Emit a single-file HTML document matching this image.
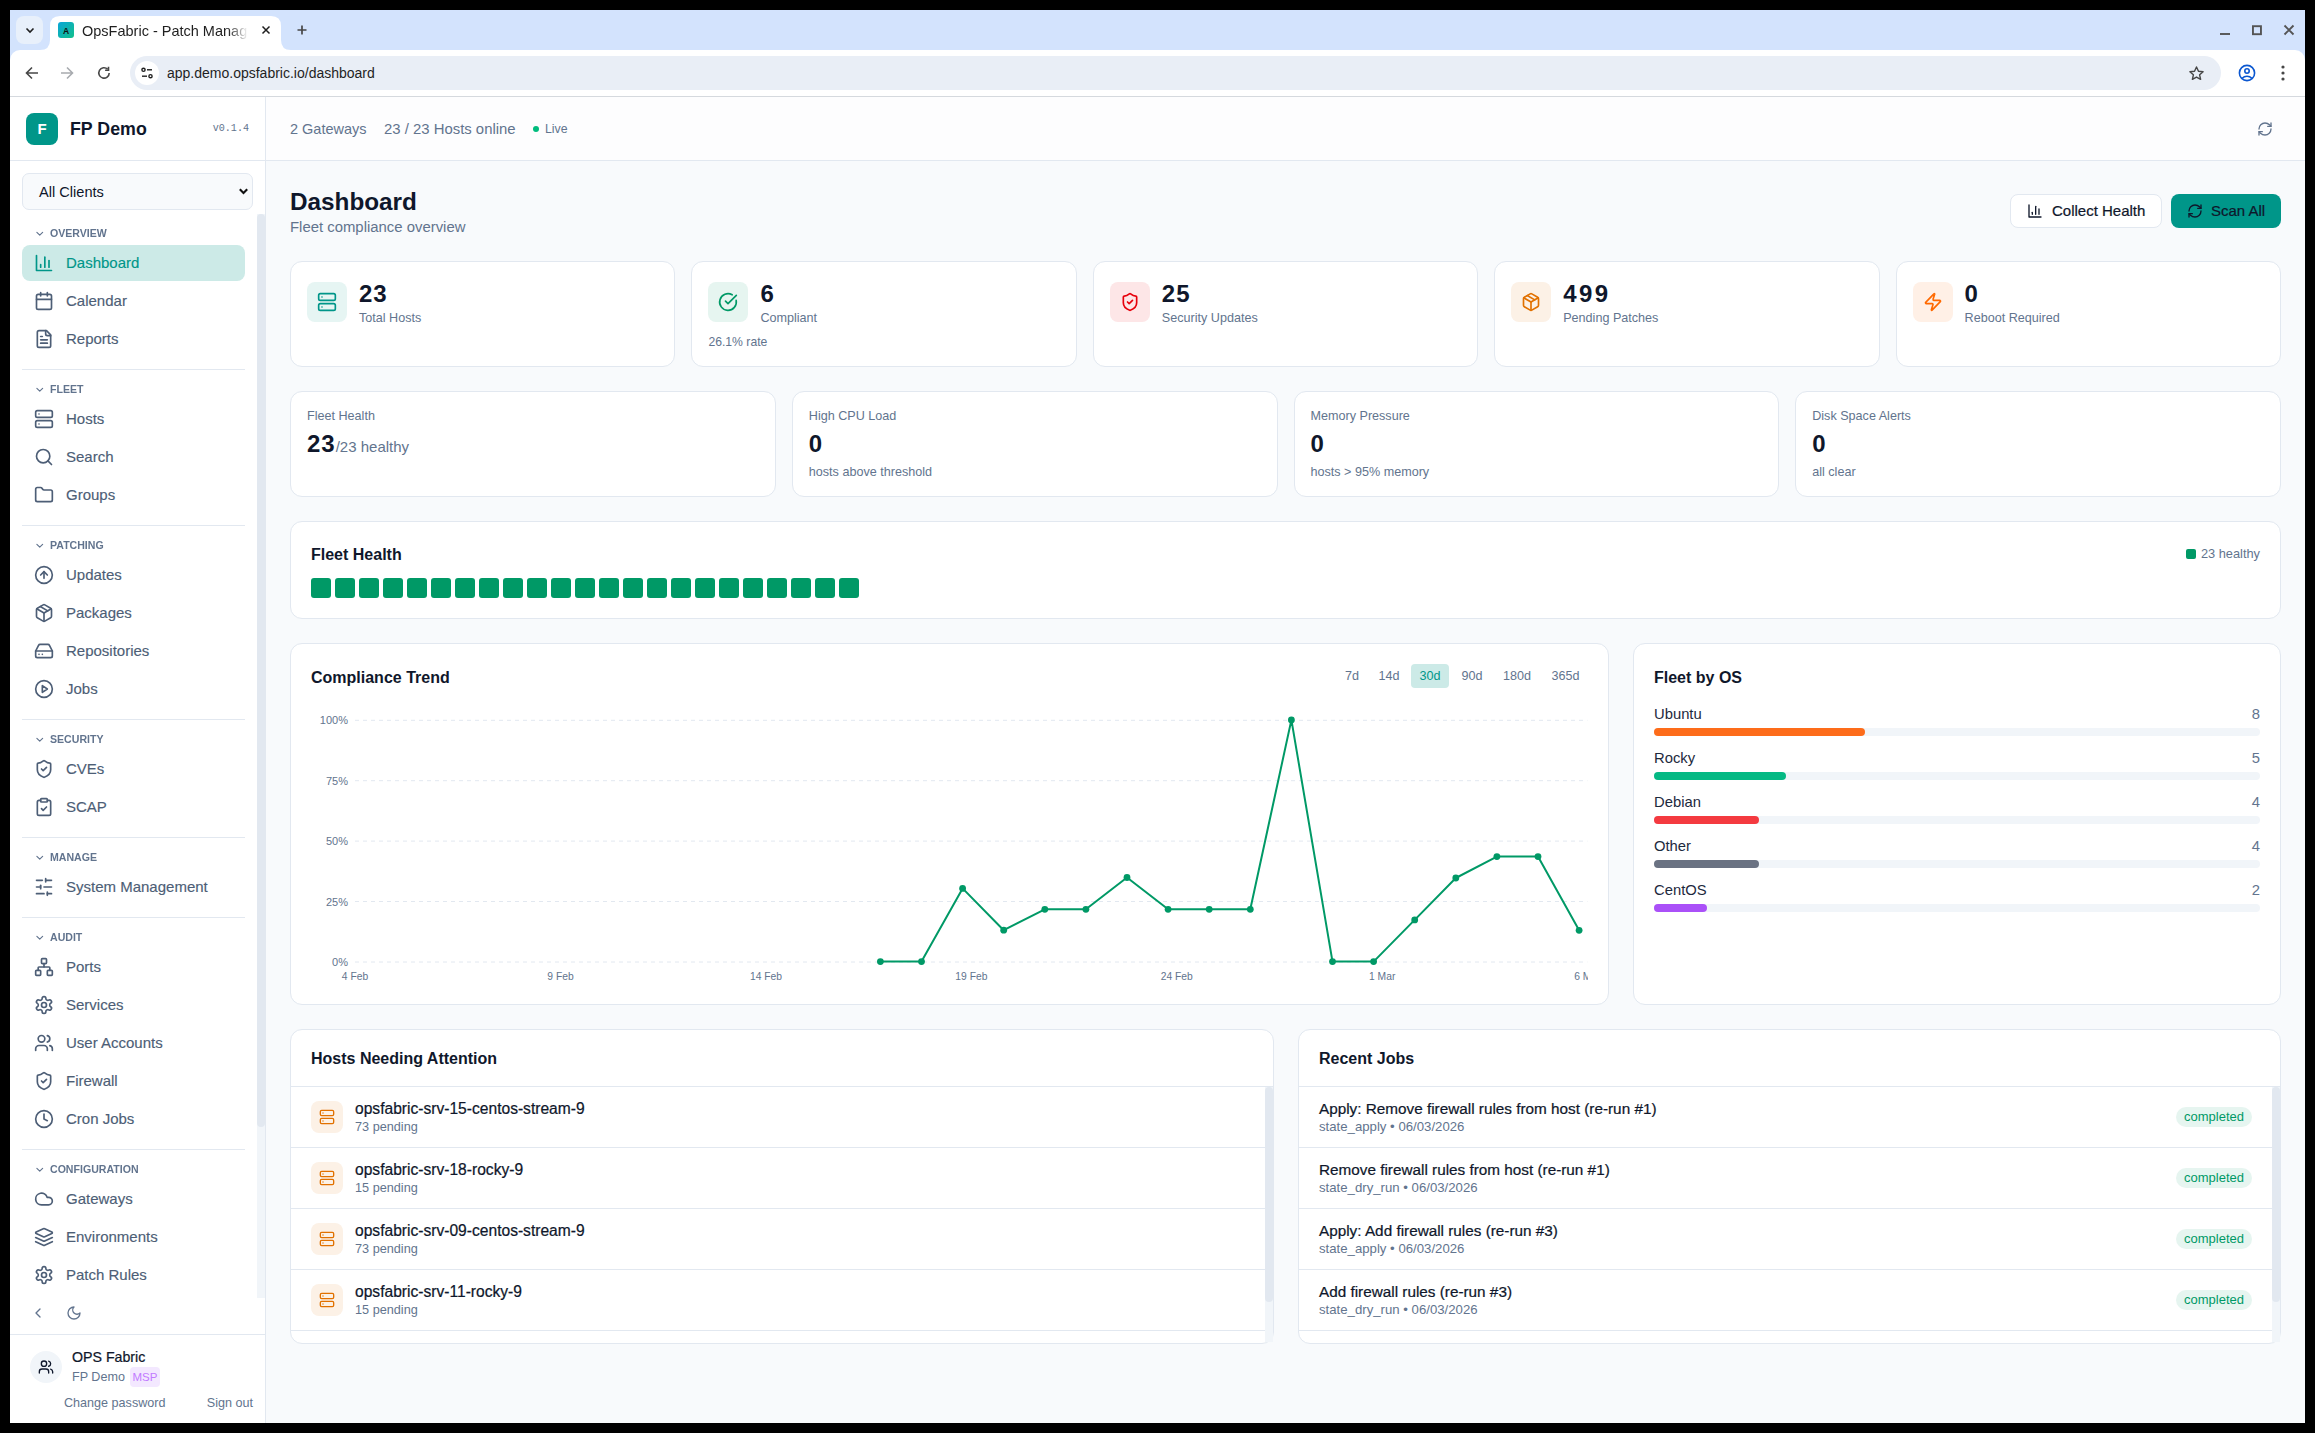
<!DOCTYPE html>
<html><head><meta charset="utf-8"><title>OpsFabric - Patch Management</title>
<style>
html,body{margin:0;padding:0;}
body{width:2315px;height:1433px;background:#000;position:relative;overflow:hidden;font-family:"Liberation Sans",sans-serif;}
.b{position:absolute;}
.t{position:absolute;white-space:nowrap;}
.ic{position:absolute;overflow:visible;}
svg text{font-family:"Liberation Sans",sans-serif;}
</style></head><body>
<div class="b" style="left:10px;top:10px;width:2295px;height:60px;background:#d3e3fd"></div>
<div class="b" style="left:10px;top:50px;width:2295px;height:46px;background:#ffffff;border-radius:10px 10px 0 0"></div>
<div class="b" style="left:10px;top:96px;width:2295px;height:1px;background:#d5d9de"></div>
<div class="b" style="left:16px;top:16px;width:27px;height:28px;background:#e8f0fb;border-radius:8px"></div>
<svg class="ic" style="left:23px;top:23px;width:14px;height:14px" viewBox="0 0 14 14" fill="none" stroke="#1f1f1f" stroke-width="1.6"><path d="M3.5 5.5 7 9l3.5-3.5"/></svg>
<svg class="ic" style="left:40px;top:16px;width:252px;height:34px" viewBox="0 0 252 34"><path d="M0 34 Q10 34 10 24 L10 10 Q10 0 20 0 L231 0 Q241 0 241 10 L241 24 Q241 34 251 34 Z" fill="#ffffff"/></svg>
<div class="b" style="left:58px;top:22px;width:16px;height:16px;border-radius:3px;background:linear-gradient(135deg,#0aa5d8,#11c08a)"></div>
<div class="t" style="left:58px;top:22.5px;font-size:8.5px;line-height:16px;color:#111;font-weight:700;width:16px;text-align:center;">A</div>
<div class="t" style="left:82px;top:21px;width:176px;height:20px;font-size:14.5px;line-height:20px;color:#1f1f1f;overflow:hidden;-webkit-mask-image:linear-gradient(90deg,#000 146px,transparent 166px)">OpsFabric - Patch Management</div>
<svg class="ic" style="left:260px;top:24px;width:12px;height:12px" viewBox="0 0 12 12" stroke="#1f1f1f" stroke-width="1.5"><path d="M2.5 2.5l7 7M9.5 2.5l-7 7"/></svg>
<svg class="ic" style="left:295px;top:23px;width:14px;height:14px" viewBox="0 0 14 14" stroke="#474747" stroke-width="1.7"><path d="M7 2.5v9M2.5 7h9"/></svg>
<svg class="ic" style="left:2216px;top:20px;width:84px;height:20px" viewBox="0 0 84 20" fill="none" stroke="#545454" stroke-width="1.9"><path d="M4 14h10"/><rect x="36.95" y="6.2" width="8" height="8"/><path d="M68.5 5.5l9 9M77.5 5.5l-9 9"/></svg>
<svg class="ic" style="left:24px;top:65px;width:16px;height:16px" viewBox="0 0 16 16" fill="none" stroke="#474747" stroke-width="1.6"><path d="M14 8H2.5M8 2.5 2.5 8 8 13.5"/></svg>
<svg class="ic" style="left:59px;top:65px;width:16px;height:16px" viewBox="0 0 16 16" fill="none" stroke="#a8abaf" stroke-width="1.6"><path d="M2 8h11.5M8 2.5 13.5 8 8 13.5"/></svg>
<svg class="ic" style="left:96px;top:65px;width:16px;height:16px" viewBox="0 0 16 16" fill="none" stroke="#474747" stroke-width="1.6"><path d="M13.2 8a5.2 5.2 0 1 1-1.6-3.8"/><path d="M12.5 1.8v3.4H9.1"/></svg>
<div class="b" style="left:130px;top:56px;width:2091px;height:34px;background:#e9eef6;border-radius:17px"></div>
<div class="b" style="left:135px;top:61px;width:24px;height:24px;background:#ffffff;border-radius:12px"></div>
<svg class="ic" style="left:139px;top:65px;width:16px;height:16px" viewBox="0 0 16 16" fill="none" stroke="#1f1f1f" stroke-width="1.4"><circle cx="4.5" cy="4.8" r="1.6"/><path d="M8 4.8h5"/><circle cx="11.5" cy="11.2" r="1.6"/><path d="M3 11.2h5"/></svg>
<div class="t" style="left:167px;top:63.0px;font-size:14px;line-height:20px;color:#1f1f1f;">app.demo.opsfabric.io/dashboard</div>
<svg class="ic" style="left:2188px;top:65px;width:17px;height:17px" viewBox="0 0 24 24" fill="none" stroke="#474747" stroke-width="2" stroke-linejoin="round"><path d="M12 2.8l2.8 6 6.5.7-4.9 4.4 1.4 6.4L12 17l-5.8 3.3 1.4-6.4-4.9-4.4 6.5-.7z"/></svg>
<svg class="ic" style="left:2238px;top:64px;width:18px;height:18px" viewBox="0 0 18 18" fill="none" stroke="#0b57d0" stroke-width="1.6"><circle cx="9" cy="9" r="7.6"/><circle cx="9" cy="7" r="2.2"/><path d="M4.2 14.2c1.2-1.3 2.9-2 4.8-2s3.6.7 4.8 2"/></svg>
<svg class="ic" style="left:2279px;top:64px;width:8px;height:18px" viewBox="0 0 8 18" fill="#474747"><circle cx="4" cy="3" r="1.6"/><circle cx="4" cy="9" r="1.6"/><circle cx="4" cy="15" r="1.6"/></svg>
<div class="b" style="left:10px;top:97px;width:2295px;height:1326px;background:#f8fafc"></div>
<div class="b" style="left:10px;top:97px;width:255px;height:1326px;background:#ffffff;border-right:1px solid #e2e8f0"></div>
<div class="b" style="left:10px;top:160px;width:255px;height:1px;background:#e2e8f0"></div>
<div class="b" style="left:26px;top:113px;width:32px;height:32px;background:#009689;border-radius:8px"></div>
<div class="t" style="left:26px;top:119.0px;font-size:15px;line-height:20px;color:#ffffff;font-weight:700;width:32px;text-align:center;">F</div>
<div class="t" style="left:70px;top:117.0px;font-size:17.8px;line-height:24px;color:#0f172b;font-weight:700;">FP Demo</div>
<div class="t" style="left:189px;width:60px;text-align:right;top:122.0px;font-size:10.1px;line-height:14px;color:#62748e;font-family:'Liberation Mono',monospace;">v0.1.4</div>
<div class="b" style="left:22px;top:173px;width:231px;height:37px;background:#f8fafc;border:1px solid #e2e8f0;border-radius:7px;box-sizing:border-box"></div>
<div class="t" style="left:39px;top:181.5px;font-size:14.6px;line-height:20px;color:#0f172b;">All Clients</div>
<svg class="ic" style="left:237px;top:185px;width:13px;height:13px" viewBox="0 0 13 13" fill="none" stroke="#111" stroke-width="2.1"><path d="M2.8 4.3 6.5 8l3.7-3.7"/></svg>
<div class="b" style="left:257px;top:214px;width:8px;height:1084px;background:#f1f5f9"></div>
<div class="b" style="left:257px;top:214px;width:8px;height:913px;background:#e2e8f0;border-radius:4px"></div>
<svg class="ic" style="left:34px;top:227.5px;width:11.5px;height:11.5px" viewBox="0 0 24 24" fill="none" stroke="#62748e" stroke-width="2.4" stroke-linecap="round" stroke-linejoin="round"><path d="m6 9 6 6 6-6"/></svg>
<div class="t" style="left:50px;top:225.0px;font-size:11.5px;line-height:16px;color:#62748e;font-weight:700;transform:scaleX(.92);transform-origin:0 50%;">OVERVIEW</div>
<div class="b" style="left:22px;top:245px;width:223px;height:36px;background:#cceae7;border-radius:8px"></div>
<svg class="ic" style="left:34px;top:253px;width:20px;height:20px" viewBox="0 0 24 24" fill="none" stroke="#009689" stroke-width="2" stroke-linecap="round" stroke-linejoin="round"><path d="M3 3v18h18"/><path d="M18 17V9"/><path d="M13 17V5"/><path d="M8 17v-3"/></svg>
<div class="t" style="left:66px;top:253.0px;font-size:15px;line-height:20px;color:#009689;-webkit-text-stroke:0.15px currentColor;">Dashboard</div>
<svg class="ic" style="left:34px;top:291px;width:20px;height:20px" viewBox="0 0 24 24" fill="none" stroke="#4d5e76" stroke-width="2" stroke-linecap="round" stroke-linejoin="round"><rect width="18" height="18" x="3" y="4" rx="2"/><path d="M16 2v4"/><path d="M8 2v4"/><path d="M3 10h18"/></svg>
<div class="t" style="left:66px;top:291.0px;font-size:15px;line-height:20px;color:#4d5e76;-webkit-text-stroke:0.15px currentColor;">Calendar</div>
<svg class="ic" style="left:34px;top:329px;width:20px;height:20px" viewBox="0 0 24 24" fill="none" stroke="#4d5e76" stroke-width="2" stroke-linecap="round" stroke-linejoin="round"><path d="M15 2H6a2 2 0 0 0-2 2v16a2 2 0 0 0 2 2h12a2 2 0 0 0 2-2V7Z"/><path d="M14 2v4a2 2 0 0 0 2 2h4"/><path d="M10 9H8"/><path d="M16 13H8"/><path d="M16 17H8"/></svg>
<div class="t" style="left:66px;top:329.0px;font-size:15px;line-height:20px;color:#4d5e76;-webkit-text-stroke:0.15px currentColor;">Reports</div>
<div class="b" style="left:22px;top:369px;width:223px;height:1px;background:#e2e8f0"></div>
<svg class="ic" style="left:34px;top:383.5px;width:11.5px;height:11.5px" viewBox="0 0 24 24" fill="none" stroke="#62748e" stroke-width="2.4" stroke-linecap="round" stroke-linejoin="round"><path d="m6 9 6 6 6-6"/></svg>
<div class="t" style="left:50px;top:381.0px;font-size:11.5px;line-height:16px;color:#62748e;font-weight:700;transform:scaleX(.92);transform-origin:0 50%;">FLEET</div>
<svg class="ic" style="left:34px;top:409px;width:20px;height:20px" viewBox="0 0 24 24" fill="none" stroke="#4d5e76" stroke-width="2" stroke-linecap="round" stroke-linejoin="round"><rect width="20" height="8" x="2" y="2" rx="2"/><rect width="20" height="8" x="2" y="14" rx="2"/><path d="M6 6h.01"/><path d="M6 18h.01"/></svg>
<div class="t" style="left:66px;top:409.0px;font-size:15px;line-height:20px;color:#4d5e76;-webkit-text-stroke:0.15px currentColor;">Hosts</div>
<svg class="ic" style="left:34px;top:447px;width:20px;height:20px" viewBox="0 0 24 24" fill="none" stroke="#4d5e76" stroke-width="2" stroke-linecap="round" stroke-linejoin="round"><circle cx="11" cy="11" r="8"/><path d="m21 21-4.3-4.3"/></svg>
<div class="t" style="left:66px;top:447.0px;font-size:15px;line-height:20px;color:#4d5e76;-webkit-text-stroke:0.15px currentColor;">Search</div>
<svg class="ic" style="left:34px;top:485px;width:20px;height:20px" viewBox="0 0 24 24" fill="none" stroke="#4d5e76" stroke-width="2" stroke-linecap="round" stroke-linejoin="round"><path d="M20 20a2 2 0 0 0 2-2V8a2 2 0 0 0-2-2h-7.9a2 2 0 0 1-1.69-.9L9.6 3.9A2 2 0 0 0 7.93 3H4a2 2 0 0 0-2 2v13a2 2 0 0 0 2 2Z"/></svg>
<div class="t" style="left:66px;top:485.0px;font-size:15px;line-height:20px;color:#4d5e76;-webkit-text-stroke:0.15px currentColor;">Groups</div>
<div class="b" style="left:22px;top:525px;width:223px;height:1px;background:#e2e8f0"></div>
<svg class="ic" style="left:34px;top:539.5px;width:11.5px;height:11.5px" viewBox="0 0 24 24" fill="none" stroke="#62748e" stroke-width="2.4" stroke-linecap="round" stroke-linejoin="round"><path d="m6 9 6 6 6-6"/></svg>
<div class="t" style="left:50px;top:537.0px;font-size:11.5px;line-height:16px;color:#62748e;font-weight:700;transform:scaleX(.92);transform-origin:0 50%;">PATCHING</div>
<svg class="ic" style="left:34px;top:565px;width:20px;height:20px" viewBox="0 0 24 24" fill="none" stroke="#4d5e76" stroke-width="2" stroke-linecap="round" stroke-linejoin="round"><circle cx="12" cy="12" r="10"/><path d="m16 12-4-4-4 4"/><path d="M12 16V8"/></svg>
<div class="t" style="left:66px;top:565.0px;font-size:15px;line-height:20px;color:#4d5e76;-webkit-text-stroke:0.15px currentColor;">Updates</div>
<svg class="ic" style="left:34px;top:603px;width:20px;height:20px" viewBox="0 0 24 24" fill="none" stroke="#4d5e76" stroke-width="2" stroke-linecap="round" stroke-linejoin="round"><path d="m7.5 4.27 9 5.15"/><path d="M21 8a2 2 0 0 0-1-1.73l-7-4a2 2 0 0 0-2 0l-7 4A2 2 0 0 0 3 8v8a2 2 0 0 0 1 1.73l7 4a2 2 0 0 0 2 0l7-4A2 2 0 0 0 21 16Z"/><path d="m3.3 7 8.7 5 8.7-5"/><path d="M12 22V12"/></svg>
<div class="t" style="left:66px;top:603.0px;font-size:15px;line-height:20px;color:#4d5e76;-webkit-text-stroke:0.15px currentColor;">Packages</div>
<svg class="ic" style="left:34px;top:641px;width:20px;height:20px" viewBox="0 0 24 24" fill="none" stroke="#4d5e76" stroke-width="2" stroke-linecap="round" stroke-linejoin="round"><path d="M22 12H2"/><path d="M5.45 5.11 2 12v6a2 2 0 0 0 2 2h16a2 2 0 0 0 2-2v-6l-3.45-6.89A2 2 0 0 0 16.76 4H7.24a2 2 0 0 0-1.79 1.11z"/><path d="M6 16h.01"/><path d="M10 16h.01"/></svg>
<div class="t" style="left:66px;top:641.0px;font-size:15px;line-height:20px;color:#4d5e76;-webkit-text-stroke:0.15px currentColor;">Repositories</div>
<svg class="ic" style="left:34px;top:679px;width:20px;height:20px" viewBox="0 0 24 24" fill="none" stroke="#4d5e76" stroke-width="2" stroke-linecap="round" stroke-linejoin="round"><circle cx="12" cy="12" r="10"/><path d="M10 8l6 4-6 4z"/></svg>
<div class="t" style="left:66px;top:679.0px;font-size:15px;line-height:20px;color:#4d5e76;-webkit-text-stroke:0.15px currentColor;">Jobs</div>
<div class="b" style="left:22px;top:719px;width:223px;height:1px;background:#e2e8f0"></div>
<svg class="ic" style="left:34px;top:733.5px;width:11.5px;height:11.5px" viewBox="0 0 24 24" fill="none" stroke="#62748e" stroke-width="2.4" stroke-linecap="round" stroke-linejoin="round"><path d="m6 9 6 6 6-6"/></svg>
<div class="t" style="left:50px;top:731.0px;font-size:11.5px;line-height:16px;color:#62748e;font-weight:700;transform:scaleX(.92);transform-origin:0 50%;">SECURITY</div>
<svg class="ic" style="left:34px;top:759px;width:20px;height:20px" viewBox="0 0 24 24" fill="none" stroke="#4d5e76" stroke-width="2" stroke-linecap="round" stroke-linejoin="round"><path d="M20 13c0 5-3.5 7.5-7.66 8.95a1 1 0 0 1-.67-.01C7.5 20.5 4 18 4 13V6a1 1 0 0 1 1-1c2 0 4.5-1.2 6.24-2.72a1.17 1.17 0 0 1 1.52 0C14.51 3.81 17 5 19 5a1 1 0 0 1 1 1z"/><path d="m9 12 2 2 4-4"/></svg>
<div class="t" style="left:66px;top:759.0px;font-size:15px;line-height:20px;color:#4d5e76;-webkit-text-stroke:0.15px currentColor;">CVEs</div>
<svg class="ic" style="left:34px;top:797px;width:20px;height:20px" viewBox="0 0 24 24" fill="none" stroke="#4d5e76" stroke-width="2" stroke-linecap="round" stroke-linejoin="round"><rect width="8" height="4" x="8" y="2" rx="1"/><path d="M16 4h2a2 2 0 0 1 2 2v14a2 2 0 0 1-2 2H6a2 2 0 0 1-2-2V6a2 2 0 0 1 2-2h2"/><path d="m9 14 2 2 4-4"/></svg>
<div class="t" style="left:66px;top:797.0px;font-size:15px;line-height:20px;color:#4d5e76;-webkit-text-stroke:0.15px currentColor;">SCAP</div>
<div class="b" style="left:22px;top:837px;width:223px;height:1px;background:#e2e8f0"></div>
<svg class="ic" style="left:34px;top:851.5px;width:11.5px;height:11.5px" viewBox="0 0 24 24" fill="none" stroke="#62748e" stroke-width="2.4" stroke-linecap="round" stroke-linejoin="round"><path d="m6 9 6 6 6-6"/></svg>
<div class="t" style="left:50px;top:849.0px;font-size:11.5px;line-height:16px;color:#62748e;font-weight:700;transform:scaleX(.92);transform-origin:0 50%;">MANAGE</div>
<svg class="ic" style="left:34px;top:877px;width:20px;height:20px" viewBox="0 0 24 24" fill="none" stroke="#4d5e76" stroke-width="2" stroke-linecap="round" stroke-linejoin="round"><path d="M21 4h-7"/><path d="M10 4H3"/><path d="M21 12h-9"/><path d="M8 12H3"/><path d="M21 20h-5"/><path d="M12 20H3"/><path d="M14 2v4"/><path d="M8 10v4"/><path d="M16 18v4"/></svg>
<div class="t" style="left:66px;top:877.0px;font-size:15px;line-height:20px;color:#4d5e76;-webkit-text-stroke:0.15px currentColor;">System Management</div>
<div class="b" style="left:22px;top:917px;width:223px;height:1px;background:#e2e8f0"></div>
<svg class="ic" style="left:34px;top:931.5px;width:11.5px;height:11.5px" viewBox="0 0 24 24" fill="none" stroke="#62748e" stroke-width="2.4" stroke-linecap="round" stroke-linejoin="round"><path d="m6 9 6 6 6-6"/></svg>
<div class="t" style="left:50px;top:929.0px;font-size:11.5px;line-height:16px;color:#62748e;font-weight:700;transform:scaleX(.92);transform-origin:0 50%;">AUDIT</div>
<svg class="ic" style="left:34px;top:957px;width:20px;height:20px" viewBox="0 0 24 24" fill="none" stroke="#4d5e76" stroke-width="2" stroke-linecap="round" stroke-linejoin="round"><rect x="16" y="16" width="6" height="6" rx="1"/><rect x="2" y="16" width="6" height="6" rx="1"/><rect x="9" y="2" width="6" height="6" rx="1"/><path d="M5 16v-3a1 1 0 0 1 1-1h12a1 1 0 0 1 1 1v3"/><path d="M12 12V8"/></svg>
<div class="t" style="left:66px;top:957.0px;font-size:15px;line-height:20px;color:#4d5e76;-webkit-text-stroke:0.15px currentColor;">Ports</div>
<svg class="ic" style="left:34px;top:995px;width:20px;height:20px" viewBox="0 0 24 24" fill="none" stroke="#4d5e76" stroke-width="2" stroke-linecap="round" stroke-linejoin="round"><path d="M12.22 2h-.44a2 2 0 0 0-2 2v.18a2 2 0 0 1-1 1.73l-.43.25a2 2 0 0 1-2 0l-.15-.08a2 2 0 0 0-2.73.73l-.22.38a2 2 0 0 0 .73 2.73l.15.1a2 2 0 0 1 1 1.72v.51a2 2 0 0 1-1 1.74l-.15.09a2 2 0 0 0-.73 2.73l.22.38a2 2 0 0 0 2.73.73l.15-.08a2 2 0 0 1 2 0l.43.25a2 2 0 0 1 1 1.73V20a2 2 0 0 0 2 2h.44a2 2 0 0 0 2-2v-.18a2 2 0 0 1 1-1.73l.43-.25a2 2 0 0 1 2 0l.15.08a2 2 0 0 0 2.73-.73l.22-.39a2 2 0 0 0-.73-2.73l-.15-.08a2 2 0 0 1-1-1.74v-.5a2 2 0 0 1 1-1.74l.15-.09a2 2 0 0 0 .73-2.73l-.22-.38a2 2 0 0 0-2.73-.73l-.15.08a2 2 0 0 1-2 0l-.43-.25a2 2 0 0 1-1-1.73V4a2 2 0 0 0-2-2z"/><circle cx="12" cy="12" r="3"/></svg>
<div class="t" style="left:66px;top:995.0px;font-size:15px;line-height:20px;color:#4d5e76;-webkit-text-stroke:0.15px currentColor;">Services</div>
<svg class="ic" style="left:34px;top:1033px;width:20px;height:20px" viewBox="0 0 24 24" fill="none" stroke="#4d5e76" stroke-width="2" stroke-linecap="round" stroke-linejoin="round"><path d="M16 21v-2a4 4 0 0 0-4-4H6a4 4 0 0 0-4 4v2"/><circle cx="9" cy="7" r="4"/><path d="M22 21v-2a4 4 0 0 0-3-3.87"/><path d="M16 3.13a4 4 0 0 1 0 7.75"/></svg>
<div class="t" style="left:66px;top:1033.0px;font-size:15px;line-height:20px;color:#4d5e76;-webkit-text-stroke:0.15px currentColor;">User Accounts</div>
<svg class="ic" style="left:34px;top:1071px;width:20px;height:20px" viewBox="0 0 24 24" fill="none" stroke="#4d5e76" stroke-width="2" stroke-linecap="round" stroke-linejoin="round"><path d="M20 13c0 5-3.5 7.5-7.66 8.95a1 1 0 0 1-.67-.01C7.5 20.5 4 18 4 13V6a1 1 0 0 1 1-1c2 0 4.5-1.2 6.24-2.72a1.17 1.17 0 0 1 1.52 0C14.51 3.81 17 5 19 5a1 1 0 0 1 1 1z"/><path d="m9 12 2 2 4-4"/></svg>
<div class="t" style="left:66px;top:1071.0px;font-size:15px;line-height:20px;color:#4d5e76;-webkit-text-stroke:0.15px currentColor;">Firewall</div>
<svg class="ic" style="left:34px;top:1109px;width:20px;height:20px" viewBox="0 0 24 24" fill="none" stroke="#4d5e76" stroke-width="2" stroke-linecap="round" stroke-linejoin="round"><circle cx="12" cy="12" r="10"/><path d="M12 6v6l4 2"/></svg>
<div class="t" style="left:66px;top:1109.0px;font-size:15px;line-height:20px;color:#4d5e76;-webkit-text-stroke:0.15px currentColor;">Cron Jobs</div>
<div class="b" style="left:22px;top:1149px;width:223px;height:1px;background:#e2e8f0"></div>
<svg class="ic" style="left:34px;top:1163.5px;width:11.5px;height:11.5px" viewBox="0 0 24 24" fill="none" stroke="#62748e" stroke-width="2.4" stroke-linecap="round" stroke-linejoin="round"><path d="m6 9 6 6 6-6"/></svg>
<div class="t" style="left:50px;top:1161.0px;font-size:11.5px;line-height:16px;color:#62748e;font-weight:700;transform:scaleX(.92);transform-origin:0 50%;">CONFIGURATION</div>
<svg class="ic" style="left:34px;top:1189px;width:20px;height:20px" viewBox="0 0 24 24" fill="none" stroke="#4d5e76" stroke-width="2" stroke-linecap="round" stroke-linejoin="round"><path d="M17.5 19H9a7 7 0 1 1 6.71-9h1.79a4.5 4.5 0 1 1 0 9Z"/></svg>
<div class="t" style="left:66px;top:1189.0px;font-size:15px;line-height:20px;color:#4d5e76;-webkit-text-stroke:0.15px currentColor;">Gateways</div>
<svg class="ic" style="left:34px;top:1227px;width:20px;height:20px" viewBox="0 0 24 24" fill="none" stroke="#4d5e76" stroke-width="2" stroke-linecap="round" stroke-linejoin="round"><path d="m12.83 2.18a2 2 0 0 0-1.66 0L2.6 6.08a1 1 0 0 0 0 1.83l8.58 3.91a2 2 0 0 0 1.66 0l8.58-3.9a1 1 0 0 0 0-1.83Z"/><path d="m22 17.65-9.17 4.16a2 2 0 0 1-1.66 0L2 17.65"/><path d="m22 12.65-9.17 4.16a2 2 0 0 1-1.66 0L2 12.65"/></svg>
<div class="t" style="left:66px;top:1227.0px;font-size:15px;line-height:20px;color:#4d5e76;-webkit-text-stroke:0.15px currentColor;">Environments</div>
<svg class="ic" style="left:34px;top:1265px;width:20px;height:20px" viewBox="0 0 24 24" fill="none" stroke="#4d5e76" stroke-width="2" stroke-linecap="round" stroke-linejoin="round"><path d="M12.22 2h-.44a2 2 0 0 0-2 2v.18a2 2 0 0 1-1 1.73l-.43.25a2 2 0 0 1-2 0l-.15-.08a2 2 0 0 0-2.73.73l-.22.38a2 2 0 0 0 .73 2.73l.15.1a2 2 0 0 1 1 1.72v.51a2 2 0 0 1-1 1.74l-.15.09a2 2 0 0 0-.73 2.73l.22.38a2 2 0 0 0 2.73.73l.15-.08a2 2 0 0 1 2 0l.43.25a2 2 0 0 1 1 1.73V20a2 2 0 0 0 2 2h.44a2 2 0 0 0 2-2v-.18a2 2 0 0 1 1-1.73l.43-.25a2 2 0 0 1 2 0l.15.08a2 2 0 0 0 2.73-.73l.22-.39a2 2 0 0 0-.73-2.73l-.15-.08a2 2 0 0 1-1-1.74v-.5a2 2 0 0 1 1-1.74l.15-.09a2 2 0 0 0 .73-2.73l-.22-.38a2 2 0 0 0-2.73-.73l-.15.08a2 2 0 0 1-2 0l-.43-.25a2 2 0 0 1-1-1.73V4a2 2 0 0 0-2-2z"/><circle cx="12" cy="12" r="3"/></svg>
<div class="t" style="left:66px;top:1265.0px;font-size:15px;line-height:20px;color:#4d5e76;-webkit-text-stroke:0.15px currentColor;">Patch Rules</div>
<svg class="ic" style="left:30px;top:1305px;width:16px;height:16px" viewBox="0 0 24 24" fill="none" stroke="#62748e" stroke-width="2" stroke-linecap="round" stroke-linejoin="round"><path d="m15 18-6-6 6-6"/></svg>
<svg class="ic" style="left:66px;top:1305px;width:16px;height:16px" viewBox="0 0 24 24" fill="none" stroke="#62748e" stroke-width="2" stroke-linecap="round" stroke-linejoin="round"><path d="M12 3a6 6 0 0 0 9 9 9 9 0 1 1-9-9Z"/></svg>
<div class="b" style="left:10px;top:1334px;width:255px;height:1px;background:#e2e8f0"></div>
<div class="b" style="left:30px;top:1351px;width:32px;height:32px;background:#f1f5f9;border-radius:16px"></div>
<svg class="ic" style="left:38px;top:1359px;width:16px;height:16px" viewBox="0 0 24 24" fill="none" stroke="#0f172b" stroke-width="2" stroke-linecap="round" stroke-linejoin="round"><path d="M16 21v-2a4 4 0 0 0-4-4H6a4 4 0 0 0-4 4v2"/><circle cx="9" cy="7" r="4"/><path d="M22 21v-2a4 4 0 0 0-3-3.87"/><path d="M16 3.13a4 4 0 0 1 0 7.75"/></svg>
<div class="t" style="left:72px;top:1347.0px;font-size:14.2px;line-height:20px;color:#0f172b;-webkit-text-stroke:0.22px currentColor;">OPS Fabric</div>
<div class="t" style="left:72px;top:1369.0px;font-size:12.6px;line-height:16px;color:#62748e;">FP Demo</div>
<div class="b" style="left:130px;top:1367px;width:30px;height:20px;background:#f3e8ff;border-radius:4px"></div>
<div class="t" style="left:130px;top:1369.0px;font-size:11.5px;line-height:16px;color:#c27aff;width:30px;text-align:center;">MSP</div>
<div class="t" style="left:64px;top:1394.5px;font-size:12.6px;line-height:16px;color:#62748e;">Change password</div>
<div class="t" style="left:173px;width:80px;text-align:right;top:1394.5px;font-size:12.6px;line-height:16px;color:#62748e;">Sign out</div>
<div class="b" style="left:266px;top:97px;width:2039px;height:64px;background:#fdfdfe;border-bottom:1px solid #e2e8f0;box-sizing:border-box"></div>
<div class="t" style="left:290px;top:119.0px;font-size:14.5px;line-height:20px;color:#62748e;">2 Gateways</div>
<div class="t" style="left:384px;top:119.0px;font-size:14.9px;line-height:20px;color:#62748e;">23 / 23 Hosts online</div>
<div class="b" style="left:533px;top:126px;width:6px;height:6px;background:#00bc7d;border-radius:3px"></div>
<div class="t" style="left:545px;top:121.0px;font-size:12.3px;line-height:16px;color:#62748e;">Live</div>
<svg class="ic" style="left:2257px;top:121px;width:16px;height:16px" viewBox="0 0 24 24" fill="none" stroke="#62748e" stroke-width="2" stroke-linecap="round" stroke-linejoin="round"><path d="M3 12a9 9 0 0 1 9-9 9.75 9.75 0 0 1 6.74 2.74L21 8"/><path d="M21 3v5h-5"/><path d="M21 12a9 9 0 0 1-9 9 9.75 9.75 0 0 1-6.74-2.74L3 16"/><path d="M8 16H3v5"/></svg>
<div class="t" style="left:290px;top:185.5px;font-size:24.3px;line-height:32px;color:#0f172b;font-weight:700;">Dashboard</div>
<div class="t" style="left:290px;top:217.0px;font-size:14.9px;line-height:20px;color:#62748e;">Fleet compliance overview</div>
<div class="b" style="left:2010px;top:194px;width:152px;height:34px;background:#ffffff;border:1px solid #e2e8f0;border-radius:8px;box-sizing:border-box"></div>
<svg class="ic" style="left:2027px;top:203px;width:16px;height:16px" viewBox="0 0 24 24" fill="none" stroke="#0f172b" stroke-width="2" stroke-linecap="round" stroke-linejoin="round"><path d="M3 3v18h18"/><path d="M18 17V9"/><path d="M13 17V5"/><path d="M8 17v-3"/></svg>
<div class="t" style="left:2052px;top:201.0px;font-size:15px;line-height:20px;color:#0f172b;-webkit-text-stroke:0.22px currentColor;">Collect Health</div>
<div class="b" style="left:2171px;top:194px;width:110px;height:34px;background:#009689;border-radius:8px"></div>
<svg class="ic" style="left:2187px;top:203px;width:16px;height:16px" viewBox="0 0 24 24" fill="none" stroke="#0f172b" stroke-width="2" stroke-linecap="round" stroke-linejoin="round"><path d="M3 12a9 9 0 0 1 9-9 9.75 9.75 0 0 1 6.74 2.74L21 8"/><path d="M21 3v5h-5"/><path d="M21 12a9 9 0 0 1-9 9 9.75 9.75 0 0 1-6.74-2.74L3 16"/><path d="M8 16H3v5"/></svg>
<div class="t" style="left:2211px;top:201.0px;font-size:15px;line-height:20px;color:#0f172b;-webkit-text-stroke:0.22px currentColor;">Scan All</div>
<div class="b" style="left:290.0px;top:261px;width:385.4px;height:106px;background:#fff;border:1px solid #e2e8f0;border-radius:12px;box-sizing:border-box"></div>
<div class="b" style="left:307.0px;top:282px;width:40px;height:40px;background:#e6f5f3;border-radius:8px"></div>
<svg class="ic" style="left:317.0px;top:292px;width:20px;height:20px" viewBox="0 0 24 24" fill="none" stroke="#009689" stroke-width="2" stroke-linecap="round" stroke-linejoin="round"><rect width="20" height="8" x="2" y="2" rx="2"/><rect width="20" height="8" x="2" y="14" rx="2"/><path d="M6 6h.01"/><path d="M6 18h.01"/></svg>
<div class="t" style="left:359.0px;top:277.5px;font-size:24px;line-height:32px;color:#0f172b;font-weight:700;letter-spacing:1px;">23</div>
<div class="t" style="left:359.0px;top:309.5px;font-size:12.6px;line-height:16px;color:#62748e;">Total Hosts</div>
<div class="b" style="left:691.4px;top:261px;width:385.4px;height:106px;background:#fff;border:1px solid #e2e8f0;border-radius:12px;box-sizing:border-box"></div>
<div class="b" style="left:708.4px;top:282px;width:40px;height:40px;background:#e6f5f0;border-radius:8px"></div>
<svg class="ic" style="left:718.4px;top:292px;width:20px;height:20px" viewBox="0 0 24 24" fill="none" stroke="#009966" stroke-width="2" stroke-linecap="round" stroke-linejoin="round"><path d="M21.801 10A10 10 0 1 1 17 3.335"/><path d="m9 11 3 3L22 4"/></svg>
<div class="t" style="left:760.4px;top:277.5px;font-size:24px;line-height:32px;color:#0f172b;font-weight:700;letter-spacing:1px;">6</div>
<div class="t" style="left:760.4px;top:309.5px;font-size:12.6px;line-height:16px;color:#62748e;">Compliant</div>
<div class="t" style="left:708.4px;top:333.5px;font-size:12.2px;line-height:16px;color:#62748e;">26.1% rate</div>
<div class="b" style="left:1092.8px;top:261px;width:385.4px;height:106px;background:#fff;border:1px solid #e2e8f0;border-radius:12px;box-sizing:border-box"></div>
<div class="b" style="left:1109.8px;top:282px;width:40px;height:40px;background:#fde6e7;border-radius:8px"></div>
<svg class="ic" style="left:1119.8px;top:292px;width:20px;height:20px" viewBox="0 0 24 24" fill="none" stroke="#e7000b" stroke-width="2" stroke-linecap="round" stroke-linejoin="round"><path d="M20 13c0 5-3.5 7.5-7.66 8.95a1 1 0 0 1-.67-.01C7.5 20.5 4 18 4 13V6a1 1 0 0 1 1-1c2 0 4.5-1.2 6.24-2.72a1.17 1.17 0 0 1 1.52 0C14.51 3.81 17 5 19 5a1 1 0 0 1 1 1z"/><path d="m9 12 2 2 4-4"/></svg>
<div class="t" style="left:1161.8px;top:277.5px;font-size:24px;line-height:32px;color:#0f172b;font-weight:700;letter-spacing:1px;">25</div>
<div class="t" style="left:1161.8px;top:309.5px;font-size:12.6px;line-height:16px;color:#62748e;">Security Updates</div>
<div class="b" style="left:1494.2px;top:261px;width:385.4px;height:106px;background:#fff;border:1px solid #e2e8f0;border-radius:12px;box-sizing:border-box"></div>
<div class="b" style="left:1511.2px;top:282px;width:40px;height:40px;background:#fcf1e6;border-radius:8px"></div>
<svg class="ic" style="left:1521.2px;top:292px;width:20px;height:20px" viewBox="0 0 24 24" fill="none" stroke="#e17100" stroke-width="2" stroke-linecap="round" stroke-linejoin="round"><path d="m7.5 4.27 9 5.15"/><path d="M21 8a2 2 0 0 0-1-1.73l-7-4a2 2 0 0 0-2 0l-7 4A2 2 0 0 0 3 8v8a2 2 0 0 0 1 1.73l7 4a2 2 0 0 0 2 0l7-4A2 2 0 0 0 21 16Z"/><path d="m3.3 7 8.7 5 8.7-5"/><path d="M12 22V12"/></svg>
<div class="t" style="left:1563.2px;top:277.5px;font-size:24px;line-height:32px;color:#0f172b;font-weight:700;letter-spacing:2.4px;">499</div>
<div class="t" style="left:1563.2px;top:309.5px;font-size:12.6px;line-height:16px;color:#62748e;">Pending Patches</div>
<div class="b" style="left:1895.6px;top:261px;width:385.4px;height:106px;background:#fff;border:1px solid #e2e8f0;border-radius:12px;box-sizing:border-box"></div>
<div class="b" style="left:1912.6px;top:282px;width:40px;height:40px;background:#fff0e6;border-radius:8px"></div>
<svg class="ic" style="left:1922.6px;top:292px;width:20px;height:20px" viewBox="0 0 24 24" fill="none" stroke="#ff6900" stroke-width="2" stroke-linecap="round" stroke-linejoin="round"><path d="M4 14a1 1 0 0 1-.78-1.63l9.9-10.2a.5.5 0 0 1 .86.46l-1.92 6.02A1 1 0 0 0 13 10h7a1 1 0 0 1 .78 1.63l-9.9 10.2a.5.5 0 0 1-.86-.46l1.92-6.02A1 1 0 0 0 11 14z"/></svg>
<div class="t" style="left:1964.6px;top:277.5px;font-size:24px;line-height:32px;color:#0f172b;font-weight:700;letter-spacing:1px;">0</div>
<div class="t" style="left:1964.6px;top:309.5px;font-size:12.6px;line-height:16px;color:#62748e;">Reboot Required</div>
<div class="b" style="left:290.0px;top:391px;width:485.8px;height:106px;background:#fff;border:1px solid #e2e8f0;border-radius:12px;box-sizing:border-box"></div>
<div class="t" style="left:307.0px;top:407.5px;font-size:12.6px;line-height:16px;color:#62748e;">Fleet Health</div>
<div class="t" style="left:307.0px;top:427.5px;font-size:24px;line-height:32px;color:#0f172b;font-weight:700;letter-spacing:1px;">23<span style="font-size:15px;font-weight:400;color:#62748e;letter-spacing:0">/23 healthy</span></div>
<div class="b" style="left:791.8px;top:391px;width:485.8px;height:106px;background:#fff;border:1px solid #e2e8f0;border-radius:12px;box-sizing:border-box"></div>
<div class="t" style="left:808.8px;top:407.5px;font-size:12.6px;line-height:16px;color:#62748e;">High CPU Load</div>
<div class="t" style="left:808.8px;top:427.5px;font-size:24px;line-height:32px;color:#0f172b;font-weight:700;letter-spacing:1px;">0</div>
<div class="t" style="left:808.8px;top:464.0px;font-size:12.6px;line-height:16px;color:#62748e;">hosts above threshold</div>
<div class="b" style="left:1293.5px;top:391px;width:485.8px;height:106px;background:#fff;border:1px solid #e2e8f0;border-radius:12px;box-sizing:border-box"></div>
<div class="t" style="left:1310.5px;top:407.5px;font-size:12.6px;line-height:16px;color:#62748e;">Memory Pressure</div>
<div class="t" style="left:1310.5px;top:427.5px;font-size:24px;line-height:32px;color:#0f172b;font-weight:700;letter-spacing:1px;">0</div>
<div class="t" style="left:1310.5px;top:464.0px;font-size:12.6px;line-height:16px;color:#62748e;">hosts &gt; 95% memory</div>
<div class="b" style="left:1795.2px;top:391px;width:485.8px;height:106px;background:#fff;border:1px solid #e2e8f0;border-radius:12px;box-sizing:border-box"></div>
<div class="t" style="left:1812.2px;top:407.5px;font-size:12.6px;line-height:16px;color:#62748e;">Disk Space Alerts</div>
<div class="t" style="left:1812.2px;top:427.5px;font-size:24px;line-height:32px;color:#0f172b;font-weight:700;letter-spacing:1px;">0</div>
<div class="t" style="left:1812.2px;top:464.0px;font-size:12.6px;line-height:16px;color:#62748e;">all clear</div>
<div class="b" style="left:290px;top:521px;width:1991px;height:98px;background:#fff;border:1px solid #e2e8f0;border-radius:12px;box-sizing:border-box"></div>
<div class="t" style="left:311px;top:543.0px;font-size:16px;line-height:24px;color:#0f172b;font-weight:700;">Fleet Health</div>
<div class="b" style="left:311px;top:578px;width:20px;height:20px;background:#009966;border-radius:3px"></div>
<div class="b" style="left:335px;top:578px;width:20px;height:20px;background:#009966;border-radius:3px"></div>
<div class="b" style="left:359px;top:578px;width:20px;height:20px;background:#009966;border-radius:3px"></div>
<div class="b" style="left:383px;top:578px;width:20px;height:20px;background:#009966;border-radius:3px"></div>
<div class="b" style="left:407px;top:578px;width:20px;height:20px;background:#009966;border-radius:3px"></div>
<div class="b" style="left:431px;top:578px;width:20px;height:20px;background:#009966;border-radius:3px"></div>
<div class="b" style="left:455px;top:578px;width:20px;height:20px;background:#009966;border-radius:3px"></div>
<div class="b" style="left:479px;top:578px;width:20px;height:20px;background:#009966;border-radius:3px"></div>
<div class="b" style="left:503px;top:578px;width:20px;height:20px;background:#009966;border-radius:3px"></div>
<div class="b" style="left:527px;top:578px;width:20px;height:20px;background:#009966;border-radius:3px"></div>
<div class="b" style="left:551px;top:578px;width:20px;height:20px;background:#009966;border-radius:3px"></div>
<div class="b" style="left:575px;top:578px;width:20px;height:20px;background:#009966;border-radius:3px"></div>
<div class="b" style="left:599px;top:578px;width:20px;height:20px;background:#009966;border-radius:3px"></div>
<div class="b" style="left:623px;top:578px;width:20px;height:20px;background:#009966;border-radius:3px"></div>
<div class="b" style="left:647px;top:578px;width:20px;height:20px;background:#009966;border-radius:3px"></div>
<div class="b" style="left:671px;top:578px;width:20px;height:20px;background:#009966;border-radius:3px"></div>
<div class="b" style="left:695px;top:578px;width:20px;height:20px;background:#009966;border-radius:3px"></div>
<div class="b" style="left:719px;top:578px;width:20px;height:20px;background:#009966;border-radius:3px"></div>
<div class="b" style="left:743px;top:578px;width:20px;height:20px;background:#009966;border-radius:3px"></div>
<div class="b" style="left:767px;top:578px;width:20px;height:20px;background:#009966;border-radius:3px"></div>
<div class="b" style="left:791px;top:578px;width:20px;height:20px;background:#009966;border-radius:3px"></div>
<div class="b" style="left:815px;top:578px;width:20px;height:20px;background:#009966;border-radius:3px"></div>
<div class="b" style="left:839px;top:578px;width:20px;height:20px;background:#009966;border-radius:3px"></div>
<div class="b" style="left:2186px;top:549px;width:10px;height:10px;background:#009966;border-radius:2px"></div>
<div class="t" style="left:2180px;width:80px;text-align:right;top:546.0px;font-size:12.8px;line-height:16px;color:#62748e;">23 healthy</div>
<div class="b" style="left:290px;top:643px;width:1319.3px;height:362px;background:#fff;border:1px solid #e2e8f0;border-radius:12px;box-sizing:border-box"></div>
<div class="t" style="left:311px;top:665.5px;font-size:16px;line-height:24px;color:#0f172b;font-weight:700;">Compliance Trend</div>
<div class="t" style="left:1322.0px;width:60px;text-align:center;top:668.0px;font-size:12.6px;line-height:16px;color:#62748e;">7d</div>
<div class="t" style="left:1359.0px;width:60px;text-align:center;top:668.0px;font-size:12.6px;line-height:16px;color:#62748e;">14d</div>
<div class="b" style="left:1411px;top:664px;width:38px;height:24px;background:#cceae7;border-radius:4px"></div>
<div class="t" style="left:1400.0px;width:60px;text-align:center;top:668.0px;font-size:12.6px;line-height:16px;color:#009689;">30d</div>
<div class="t" style="left:1442.0px;width:60px;text-align:center;top:668.0px;font-size:12.6px;line-height:16px;color:#62748e;">90d</div>
<div class="t" style="left:1487.0px;width:60px;text-align:center;top:668.0px;font-size:12.6px;line-height:16px;color:#62748e;">180d</div>
<div class="t" style="left:1535.5px;width:60px;text-align:center;top:668.0px;font-size:12.6px;line-height:16px;color:#62748e;">365d</div>
<svg style="position:absolute;left:300px;top:700px;width:1288px;height:300px;overflow:hidden" viewBox="300 700 1288 300"><line x1="355" x2="1587.4" y1="720.3" y2="720.3" stroke="#e2e8f0" stroke-width="1" stroke-dasharray="4 4"/><line x1="355" x2="1587.4" y1="780.7" y2="780.7" stroke="#e2e8f0" stroke-width="1" stroke-dasharray="4 4"/><line x1="355" x2="1587.4" y1="841.1" y2="841.1" stroke="#e2e8f0" stroke-width="1" stroke-dasharray="4 4"/><line x1="355" x2="1587.4" y1="901.5" y2="901.5" stroke="#e2e8f0" stroke-width="1" stroke-dasharray="4 4"/><line x1="355" x2="1587.4" y1="962" y2="962" stroke="#e2e8f0" stroke-width="1" stroke-dasharray="4 4"/><text x="348" y="724.3" text-anchor="end" font-size="11" fill="#62748e">100%</text><text x="348" y="784.7" text-anchor="end" font-size="11" fill="#62748e">75%</text><text x="348" y="845.1" text-anchor="end" font-size="11" fill="#62748e">50%</text><text x="348" y="905.5" text-anchor="end" font-size="11" fill="#62748e">25%</text><text x="348" y="966" text-anchor="end" font-size="11" fill="#62748e">0%</text><text x="355" y="979.6" text-anchor="middle" font-size="10.3" fill="#62748e">4 Feb</text><text x="560.5" y="979.6" text-anchor="middle" font-size="10.3" fill="#62748e">9 Feb</text><text x="766" y="979.6" text-anchor="middle" font-size="10.3" fill="#62748e">14 Feb</text><text x="971.4" y="979.6" text-anchor="middle" font-size="10.3" fill="#62748e">19 Feb</text><text x="1176.7" y="979.6" text-anchor="middle" font-size="10.3" fill="#62748e">24 Feb</text><text x="1382.2" y="979.6" text-anchor="middle" font-size="10.3" fill="#62748e">1 Mar</text><text x="1587.4" y="979.6" text-anchor="middle" font-size="10.3" fill="#62748e">6 Mar</text><polyline fill="none" stroke="#009966" stroke-width="2" stroke-linejoin="round" points="880.4,961.6 921.5,961.6 962.6,888.4 1003.7,930.2 1044.8,909.3 1085.9,909.3 1127.0,877.5 1168.1,909.3 1209.2,909.3 1250.3,909.3 1291.4,719.9 1332.5,961.6 1373.6,961.6 1414.7,919.9 1455.8,878.0 1496.9,856.6 1538.0,856.6 1579.1,930.3"/><circle cx="880.4" cy="961.6" r="3.4" fill="#009966"/><circle cx="921.5" cy="961.6" r="3.4" fill="#009966"/><circle cx="962.6" cy="888.4" r="3.4" fill="#009966"/><circle cx="1003.7" cy="930.2" r="3.4" fill="#009966"/><circle cx="1044.8" cy="909.3" r="3.4" fill="#009966"/><circle cx="1085.9" cy="909.3" r="3.4" fill="#009966"/><circle cx="1127.0" cy="877.5" r="3.4" fill="#009966"/><circle cx="1168.1" cy="909.3" r="3.4" fill="#009966"/><circle cx="1209.2" cy="909.3" r="3.4" fill="#009966"/><circle cx="1250.3" cy="909.3" r="3.4" fill="#009966"/><circle cx="1291.4" cy="719.9" r="3.4" fill="#009966"/><circle cx="1332.5" cy="961.6" r="3.4" fill="#009966"/><circle cx="1373.6" cy="961.6" r="3.4" fill="#009966"/><circle cx="1414.7" cy="919.9" r="3.4" fill="#009966"/><circle cx="1455.8" cy="878.0" r="3.4" fill="#009966"/><circle cx="1496.9" cy="856.6" r="3.4" fill="#009966"/><circle cx="1538.0" cy="856.6" r="3.4" fill="#009966"/><circle cx="1579.1" cy="930.3" r="3.4" fill="#009966"/></svg>
<div class="b" style="left:1633.3px;top:643px;width:647.7px;height:362px;background:#fff;border:1px solid #e2e8f0;border-radius:12px;box-sizing:border-box"></div>
<div class="t" style="left:1654px;top:665.5px;font-size:16px;line-height:24px;color:#0f172b;font-weight:700;">Fleet by OS</div>
<div class="t" style="left:1654px;top:703.5px;font-size:14.8px;line-height:20px;color:#1d293d;">Ubuntu</div>
<div class="t" style="left:2220px;width:40px;text-align:right;top:703.5px;font-size:14.8px;line-height:20px;color:#62748e;">8</div>
<div class="b" style="left:1654px;top:728.0px;width:606px;height:8px;background:#f1f5f9;border-radius:4px"></div>
<div class="b" style="left:1654px;top:728.0px;width:210.8px;height:8px;background:#fd6c1a;border-radius:4px"></div>
<div class="t" style="left:1654px;top:747.5px;font-size:14.8px;line-height:20px;color:#1d293d;">Rocky</div>
<div class="t" style="left:2220px;width:40px;text-align:right;top:747.5px;font-size:14.8px;line-height:20px;color:#62748e;">5</div>
<div class="b" style="left:1654px;top:772.0px;width:606px;height:8px;background:#f1f5f9;border-radius:4px"></div>
<div class="b" style="left:1654px;top:772.0px;width:131.7px;height:8px;background:#05b984;border-radius:4px"></div>
<div class="t" style="left:1654px;top:791.5px;font-size:14.8px;line-height:20px;color:#1d293d;">Debian</div>
<div class="t" style="left:2220px;width:40px;text-align:right;top:791.5px;font-size:14.8px;line-height:20px;color:#62748e;">4</div>
<div class="b" style="left:1654px;top:816.0px;width:606px;height:8px;background:#f1f5f9;border-radius:4px"></div>
<div class="b" style="left:1654px;top:816.0px;width:105.4px;height:8px;background:#f43a40;border-radius:4px"></div>
<div class="t" style="left:1654px;top:835.5px;font-size:14.8px;line-height:20px;color:#1d293d;">Other</div>
<div class="t" style="left:2220px;width:40px;text-align:right;top:835.5px;font-size:14.8px;line-height:20px;color:#62748e;">4</div>
<div class="b" style="left:1654px;top:860.0px;width:606px;height:8px;background:#f1f5f9;border-radius:4px"></div>
<div class="b" style="left:1654px;top:860.0px;width:105.4px;height:8px;background:#6a7282;border-radius:4px"></div>
<div class="t" style="left:1654px;top:879.5px;font-size:14.8px;line-height:20px;color:#1d293d;">CentOS</div>
<div class="t" style="left:2220px;width:40px;text-align:right;top:879.5px;font-size:14.8px;line-height:20px;color:#62748e;">2</div>
<div class="b" style="left:1654px;top:904.0px;width:606px;height:8px;background:#f1f5f9;border-radius:4px"></div>
<div class="b" style="left:1654px;top:904.0px;width:52.7px;height:8px;background:#aa50f8;border-radius:4px"></div>
<div class="b" style="left:290px;top:1029px;width:983.5px;height:315px;background:#fff;border:1px solid #e2e8f0;border-radius:12px;box-sizing:border-box;overflow:hidden"></div>
<div class="t" style="left:311px;top:1047.0px;font-size:16px;line-height:24px;color:#0f172b;font-weight:700;">Hosts Needing Attention</div>
<div class="b" style="left:291px;top:1086px;width:981.5px;height:1px;background:#e2e8f0"></div>
<div class="b" style="left:311px;top:1101px;width:32px;height:32px;background:#fcf1e6;border-radius:8px"></div>
<svg class="ic" style="left:319px;top:1109px;width:16px;height:16px" viewBox="0 0 24 24" fill="none" stroke="#e17100" stroke-width="2" stroke-linecap="round" stroke-linejoin="round"><rect width="20" height="8" x="2" y="2" rx="2"/><rect width="20" height="8" x="2" y="14" rx="2"/><path d="M6 6h.01"/><path d="M6 18h.01"/></svg>
<div class="t" style="left:355px;top:1099.0px;font-size:15.6px;line-height:20px;color:#0f172b;-webkit-text-stroke:0.22px currentColor;">opsfabric-srv-15-centos-stream-9</div>
<div class="t" style="left:355px;top:1119.0px;font-size:12.7px;line-height:16px;color:#62748e;">73 pending</div>
<div class="b" style="left:291px;top:1147px;width:974px;height:1px;background:#e2e8f0"></div>
<div class="b" style="left:311px;top:1162px;width:32px;height:32px;background:#fcf1e6;border-radius:8px"></div>
<svg class="ic" style="left:319px;top:1170px;width:16px;height:16px" viewBox="0 0 24 24" fill="none" stroke="#e17100" stroke-width="2" stroke-linecap="round" stroke-linejoin="round"><rect width="20" height="8" x="2" y="2" rx="2"/><rect width="20" height="8" x="2" y="14" rx="2"/><path d="M6 6h.01"/><path d="M6 18h.01"/></svg>
<div class="t" style="left:355px;top:1160.0px;font-size:15.6px;line-height:20px;color:#0f172b;-webkit-text-stroke:0.22px currentColor;">opsfabric-srv-18-rocky-9</div>
<div class="t" style="left:355px;top:1180.0px;font-size:12.7px;line-height:16px;color:#62748e;">15 pending</div>
<div class="b" style="left:291px;top:1208px;width:974px;height:1px;background:#e2e8f0"></div>
<div class="b" style="left:311px;top:1223px;width:32px;height:32px;background:#fcf1e6;border-radius:8px"></div>
<svg class="ic" style="left:319px;top:1231px;width:16px;height:16px" viewBox="0 0 24 24" fill="none" stroke="#e17100" stroke-width="2" stroke-linecap="round" stroke-linejoin="round"><rect width="20" height="8" x="2" y="2" rx="2"/><rect width="20" height="8" x="2" y="14" rx="2"/><path d="M6 6h.01"/><path d="M6 18h.01"/></svg>
<div class="t" style="left:355px;top:1221.0px;font-size:15.6px;line-height:20px;color:#0f172b;-webkit-text-stroke:0.22px currentColor;">opsfabric-srv-09-centos-stream-9</div>
<div class="t" style="left:355px;top:1241.0px;font-size:12.7px;line-height:16px;color:#62748e;">73 pending</div>
<div class="b" style="left:291px;top:1269px;width:974px;height:1px;background:#e2e8f0"></div>
<div class="b" style="left:311px;top:1284px;width:32px;height:32px;background:#fcf1e6;border-radius:8px"></div>
<svg class="ic" style="left:319px;top:1292px;width:16px;height:16px" viewBox="0 0 24 24" fill="none" stroke="#e17100" stroke-width="2" stroke-linecap="round" stroke-linejoin="round"><rect width="20" height="8" x="2" y="2" rx="2"/><rect width="20" height="8" x="2" y="14" rx="2"/><path d="M6 6h.01"/><path d="M6 18h.01"/></svg>
<div class="t" style="left:355px;top:1282.0px;font-size:15.6px;line-height:20px;color:#0f172b;-webkit-text-stroke:0.22px currentColor;">opsfabric-srv-11-rocky-9</div>
<div class="t" style="left:355px;top:1302.0px;font-size:12.7px;line-height:16px;color:#62748e;">15 pending</div>
<div class="b" style="left:291px;top:1330px;width:974px;height:1px;background:#e2e8f0"></div>
<div class="b" style="left:1265px;top:1087px;width:8px;height:255px;background:#f1f5f9"></div>
<div class="b" style="left:1265px;top:1087px;width:8px;height:215px;background:#e2e8f0;border-radius:4px"></div>
<div class="b" style="left:1297.5px;top:1029px;width:983.5px;height:315px;background:#fff;border:1px solid #e2e8f0;border-radius:12px;box-sizing:border-box;overflow:hidden"></div>
<div class="t" style="left:1319px;top:1047.0px;font-size:16px;line-height:24px;color:#0f172b;font-weight:700;">Recent Jobs</div>
<div class="b" style="left:1298.5px;top:1086px;width:981.5px;height:1px;background:#e2e8f0"></div>
<div class="t" style="left:1319px;top:1099.0px;font-size:15.3px;line-height:20px;color:#0f172b;-webkit-text-stroke:0.22px currentColor;">Apply: Remove firewall rules from host (re-run #1)</div>
<div class="t" style="left:1319px;top:1119.0px;font-size:13.2px;line-height:16px;color:#62748e;">state_apply • 06/03/2026</div>
<div class="b" style="left:2176px;top:1107px;width:76px;height:20px;background:#e6f5f0;border-radius:10px"></div>
<div class="t" style="left:2176.0px;width:76px;text-align:center;top:1109.0px;font-size:13px;line-height:16px;color:#009966;">completed</div>
<div class="b" style="left:1298.5px;top:1147px;width:974px;height:1px;background:#e2e8f0"></div>
<div class="t" style="left:1319px;top:1160.0px;font-size:15.3px;line-height:20px;color:#0f172b;-webkit-text-stroke:0.22px currentColor;">Remove firewall rules from host (re-run #1)</div>
<div class="t" style="left:1319px;top:1180.0px;font-size:13.2px;line-height:16px;color:#62748e;">state_dry_run • 06/03/2026</div>
<div class="b" style="left:2176px;top:1168px;width:76px;height:20px;background:#e6f5f0;border-radius:10px"></div>
<div class="t" style="left:2176.0px;width:76px;text-align:center;top:1170.0px;font-size:13px;line-height:16px;color:#009966;">completed</div>
<div class="b" style="left:1298.5px;top:1208px;width:974px;height:1px;background:#e2e8f0"></div>
<div class="t" style="left:1319px;top:1221.0px;font-size:15.3px;line-height:20px;color:#0f172b;-webkit-text-stroke:0.22px currentColor;">Apply: Add firewall rules (re-run #3)</div>
<div class="t" style="left:1319px;top:1241.0px;font-size:13.2px;line-height:16px;color:#62748e;">state_apply • 06/03/2026</div>
<div class="b" style="left:2176px;top:1229px;width:76px;height:20px;background:#e6f5f0;border-radius:10px"></div>
<div class="t" style="left:2176.0px;width:76px;text-align:center;top:1231.0px;font-size:13px;line-height:16px;color:#009966;">completed</div>
<div class="b" style="left:1298.5px;top:1269px;width:974px;height:1px;background:#e2e8f0"></div>
<div class="t" style="left:1319px;top:1282.0px;font-size:15.3px;line-height:20px;color:#0f172b;-webkit-text-stroke:0.22px currentColor;">Add firewall rules (re-run #3)</div>
<div class="t" style="left:1319px;top:1302.0px;font-size:13.2px;line-height:16px;color:#62748e;">state_dry_run • 06/03/2026</div>
<div class="b" style="left:2176px;top:1290px;width:76px;height:20px;background:#e6f5f0;border-radius:10px"></div>
<div class="t" style="left:2176.0px;width:76px;text-align:center;top:1292.0px;font-size:13px;line-height:16px;color:#009966;">completed</div>
<div class="b" style="left:1298.5px;top:1330px;width:974px;height:1px;background:#e2e8f0"></div>
<div class="b" style="left:2272px;top:1087px;width:8px;height:255px;background:#f1f5f9"></div>
<div class="b" style="left:2272px;top:1087px;width:8px;height:215px;background:#e2e8f0;border-radius:4px"></div>
</body></html>
